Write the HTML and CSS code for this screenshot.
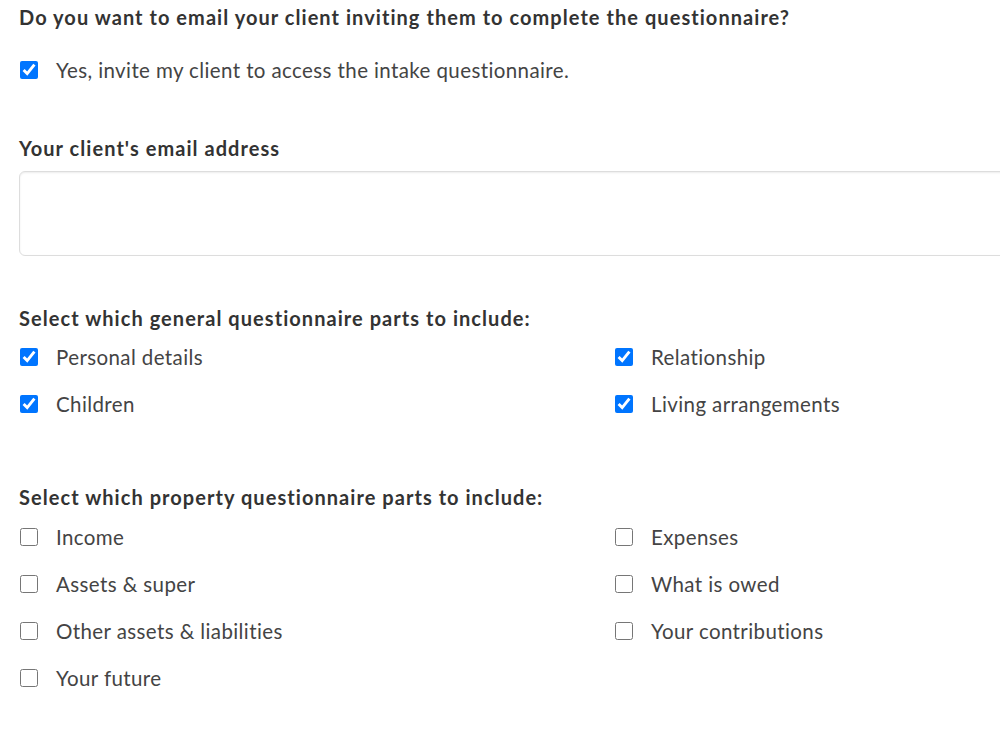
FILE: index.html
```html
<!DOCTYPE html>
<html lang="en">
<head>
<meta charset="UTF-8">
<title>Intake questionnaire</title>
<link rel="stylesheet" href="styles.css">
</head>
<body>
<div class="form">

<h3 class="q-title first">Do you want to email your client inviting them to complete the questionnaire?</h3>
<label class="option invite">
<input type="checkbox" checked>
<span>Yes, invite my client to access the intake questionnaire.</span>
</label>

<h3 class="q-title email-title">Your client's email address</h3>
<input type="email" class="email-input">

<h3 class="q-title parts-title">Select which general questionnaire parts to include:</h3>
<div class="options">
<label class="option"><input type="checkbox" checked><span>Personal details</span></label>
<label class="option"><input type="checkbox" checked><span>Relationship</span></label>
<label class="option"><input type="checkbox" checked><span>Children</span></label>
<label class="option"><input type="checkbox" checked><span>Living arrangements</span></label>
</div>

<h3 class="q-title property-title">Select which property questionnaire parts to include:</h3>
<div class="options">
<label class="option"><input type="checkbox"><span>Income</span></label>
<label class="option"><input type="checkbox"><span>Expenses</span></label>
<label class="option"><input type="checkbox"><span>Assets &amp; super</span></label>
<label class="option"><input type="checkbox"><span>What is owed</span></label>
<label class="option"><input type="checkbox"><span>Other assets &amp; liabilities</span></label>
<label class="option"><input type="checkbox"><span>Your contributions</span></label>
<label class="option"><input type="checkbox"><span>Your future</span></label>
</div>

</div>
</body>
</html>
```

FILE: styles.css
```css
html, body {
overflow: hidden;
}
body {
margin: 0;
padding: 5px 0 0 19px;
font-family: Lato, "Open Sans", sans-serif;
background-color: #fff;
color: #444;
}
.form {
width: 1190px;
}
.q-title {
font-size: 20px;
line-height: 24px;
font-weight: 700;
letter-spacing: 1.05px;
color: #333;
margin: 0;
}
.email-title {
margin-top: 54px;
}
.parts-title {
margin-top: 50px;
}
.property-title {
margin-top: 69px;
}
.option {
display: flex;
align-items: center;
height: 24px;
font-size: 20.5px;
letter-spacing: 0.4px;
color: #444;
}
.option input {
width: 18px;
height: 18px;
margin: 0 18px 0 1px;
}
.invite {
margin-top: 29px;
}
.email-input {
display: block;
box-sizing: border-box;
width: 100%;
height: 85px;
margin-top: 11px;
border: 1px solid #ddd;
border-radius: 6px;
box-shadow: inset 0 1px 2px rgba(0, 0, 0, 0.08);
}
.options {
display: grid;
grid-template-columns: 595px 595px;
row-gap: 23px;
margin-top: 15px;
}
.property-title + .options {
margin-top: 16px;
}
```
